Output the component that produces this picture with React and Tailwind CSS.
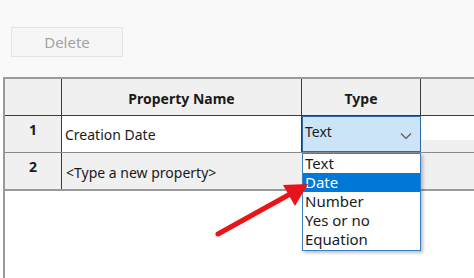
export default function App() {
  const font = { fontFamily: '"Noto Sans", "Open Sans", sans-serif' };
  return (
    <div className="relative w-[474px] h-[278px] overflow-hidden bg-white text-[14px] text-[#1a1a1a]" style={font}>
      <div className="h-[77px] bg-[#f9f9f9] pt-[27px] pl-[11px]">
        <div className="w-[112px] h-[30px] border border-[#e3e3e3] bg-[#f6f6f6] flex items-center justify-center text-[#a3a3a3] text-[15px]">
          Delete
        </div>
      </div>
      <div className="ml-[3px] border-l-2 border-t-2 border-[#9a9a9a] h-[201px] bg-white">
        <div className="flex h-[37px] border-b border-[#3a3a3a] bg-[#f0f0f0]">
          <div className="w-[57px] border-r border-[#3a3a3a]" />
          <div className="w-[240px] border-r border-[#3a3a3a] flex items-center justify-center font-bold pt-[2px]">Property Name</div>
          <div className="w-[119px] border-r border-[#3a3a3a] flex items-center justify-center font-bold pt-[2px]">Type</div>
          <div className="flex-1" />
        </div>
        <div className="flex h-[37px] border-b border-[#8a8a8a]">
          <div className="w-[57px] border-r border-[#3a3a3a] bg-[#f0f0f0] flex justify-center font-bold pt-[3px]">1</div>
          <div className="w-[240px] border-r border-[#3a3a3a] flex items-center pl-[3px] bg-white">Creation Date</div>
          <div className="w-[119px] bg-[#cce4f7] border border-[#2d6aa5] flex justify-between pl-[2px] pr-[8px]">
            <span className="pt-[4px]">Text</span>
            <svg width="12" height="8" viewBox="0 0 12 8" className="mt-[15px]">
              <path d="M1 1.5 L6 6.5 L11 1.5" fill="none" stroke="#555" strokeWidth="1.1" />
            </svg>
          </div>
          <div className="flex-1 flex flex-col">
            <div className="h-[24px] bg-white" />
            <div className="flex-1 bg-[#f0f0f0]" />
          </div>
        </div>
        <div className="flex h-[38px] border-b-2 border-[#9a9a9a]">
          <div className="w-[57px] border-r border-[#3a3a3a] bg-[#f0f0f0] flex justify-center font-bold pt-[3px]">2</div>
          <div className="flex-1 bg-[#f0f0f0] flex items-center pl-[4px] pt-[2px]">&lt;Type a new property&gt;</div>
        </div>
      </div>
      <div className="absolute left-[302px] top-[153px] w-[119px] h-[98px] bg-white border border-[#3b7fc4] shadow-[2px_2px_3px_rgba(0,0,0,0.25)] flex flex-col leading-[19px] text-[15px]">
        <div className="h-[19px] pl-[2px]">Text</div>
        <div className="h-[19px] pl-[2px] bg-[#0078d7] text-white">Date</div>
        <div className="h-[19px] pl-[2px]">Number</div>
        <div className="h-[19px] pl-[2px]">Yes or no</div>
        <div className="h-[19px] pl-[2px]">Equation</div>
      </div>
      <svg className="absolute left-0 top-0" width="474" height="278" viewBox="0 0 474 278">
        <line x1="218" y1="234" x2="292" y2="193" stroke="#e8141a" strokeWidth="5" strokeLinecap="round" />
        <polygon points="308,184 283,185 295,206" fill="#e8141a" />
      </svg>
    </div>
  );
}
